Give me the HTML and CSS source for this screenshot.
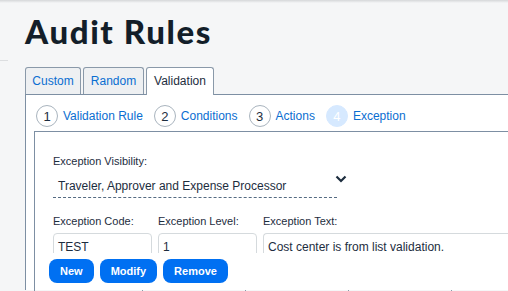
FILE: index.html
```html
<!DOCTYPE html>
<html lang="en">

<head>
    <meta charset="UTF-8">
    <meta name="viewport" content="width=device-width, initial-scale=1.0">
    <title>Audit Rules</title>
    <link rel="stylesheet" href="styles.css">
</head>

<body>
    <div class="shell-shadow"></div>

    <h1 class="page-title">Audit Rules</h1>
    <div class="stub"></div>

    <div class="tabs">
        <div class="tab custom">Custom</div>
        <div class="tab random">Random</div>
        <div class="tab active">Validation</div>
    </div>

    <div class="panel">
        <div class="steps">
            <div class="step"><span class="num">1</span>Validation Rule</div>
            <div class="step"><span class="num">2</span>Conditions</div>
            <div class="step"><span class="num">3</span>Actions</div>
            <div class="step current"><span class="num">4</span>Exception</div>
        </div>

        <div class="form-box">
            <label class="label">Exception Visibility:</label>
            <div class="select">
                <span>Traveler, Approver and Expense Processor</span>
                <svg class="chevron" width="12" height="8" viewBox="0 0 12 8">
                    <path d="M1.5 1.5 L6 6 L10.5 1.5" fill="none" stroke="#1d2d3e" stroke-width="2.2" />
                </svg>
            </div>

            <div class="fields">
                <div class="field">
                    <label class="label">Exception Code:</label>
                    <div class="input">TEST</div>
                </div>
                <div class="field">
                    <label class="label">Exception Level:</label>
                    <div class="input">1</div>
                </div>
                <div class="field wide">
                    <label class="label">Exception Text:</label>
                    <div class="input">Cost center is from list validation.</div>
                </div>
            </div>

            <div class="buttons">
                <button class="btn">New</button>
                <button class="btn">Modify</button>
                <button class="btn">Remove</button>
            </div>

            <div class="table-head">
                <div class="col"></div>
                <div class="col"></div>
                <div class="col"></div>
                <div class="col"></div>
                <div class="col"></div>
            </div>
        </div>
    </div>
</body>

</html>
```

FILE: styles.css
```css
html,
body {
    height: 291px;
    overflow: hidden;
}

body {
    margin: 0;
    background-color: #f5f6f7;
    font-family: "Liberation Sans", Arial, sans-serif;
    color: #1d2d3e;
}

.shell-shadow {
    height: 3px;
    background: linear-gradient(#d5d7d9, #f5f6f7);
}

.page-title {
    margin: 8px 0 0 25px;
    font-family: Lato, sans-serif;
    font-weight: 900;
    font-size: 33px;
    line-height: 40px;
    letter-spacing: 1.6px;
    color: #131e29;
}

.stub {
    width: 8px;
    height: 1px;
    margin-top: 9px;
    background-color: #dcdee0;
}

.tabs {
    display: flex;
    gap: 2px;
    margin: 6px 0 0 25px;
    position: relative;
    z-index: 1;
}

.tab {
    width: 68px;
    box-sizing: border-box;
    height: 27px;
    line-height: 26px;
    text-align: center;
    font-size: 12px;
    color: #0a6ed1;
    background-color: #eef0f2;
    border: 1px solid #8a99a9;
    border-bottom: none;
    border-radius: 3px 3px 0 0;
}

.tab.custom {
    width: 56px;
}

.tab.random {
    width: 61px;
}

.tab.active {
    color: #1d2d3e;
    background-color: #fff;
    height: 28px;
    margin-bottom: -1px;
}

.panel {
    margin-left: 25px;
    background-color: #fff;
    border-top: 1px solid #7d8fa3;
    border-left: 1px solid #7d8fa3;
    height: 195px;
}

.steps {
    display: flex;
    gap: 11px;
    padding: 10px 0 4px 10px;
}

.step {
    display: flex;
    align-items: center;
    gap: 5px;
    font-size: 12px;
    color: #0a6ed1;
}

.num {
    width: 20px;
    height: 20px;
    border: 1px solid #a9b4be;
    border-radius: 50%;
    display: flex;
    align-items: center;
    justify-content: center;
    font-size: 13px;
    color: #1d2d3e;
}

.current .num {
    border-color: #d6e9ff;
    background-color: #d6e9ff;
    color: #fff;
}

.form-box {
    margin-left: 8px;
    border-top: 1px solid #7d8fa3;
    border-left: 1px solid #7d8fa3;
    padding: 22px 0 0 18px;
    height: 137px;
    overflow: hidden;
}

.label {
    display: block;
    font-size: 11px;
    line-height: 14px;
}

.select {
    width: 279px;
    margin-top: 11px;
    padding: 0 0 4px 5px;
    border-bottom: 1px dashed #556b82;
    font-size: 12px;
    position: relative;
}

.chevron {
    position: absolute;
    right: -10px;
    top: -4px;
}

.fields {
    display: flex;
    gap: 6px;
    margin-top: 16px;
    height: 39px;
    overflow: hidden;
}

.field {
    width: 99px;
    flex-shrink: 0;
}

.field.wide {
    flex: 1;
}

.input {
    margin-top: 5px;
    height: 30px;
    border: 1px solid #d5dadd;
    border-radius: 4px;
    padding: 6px 0 0 4px;
    box-sizing: border-box;
    font-size: 12px;
    white-space: nowrap;
}

.wide .input {
    border-right: none;
    border-radius: 4px 0 0 4px;
}

.buttons {
    display: flex;
    gap: 6px;
    margin: 6px 0 0 -4px;
}

.btn {
    height: 24px;
    padding: 0 11px;
    border: none;
    border-radius: 8px;
    background-color: #0070f2;
    color: #fff;
    font-family: "Liberation Sans", Arial, sans-serif;
    font-weight: bold;
    font-size: 11px;
}

.table-head {
    display: flex;
    margin: 7px 0 0 -13px;
    height: 20px;
}

.col {
    width: 102px;
    flex-shrink: 0;
    border-left: 1px solid #8a99a9;
}

.col:first-child {
    border-left: none;
}
```
